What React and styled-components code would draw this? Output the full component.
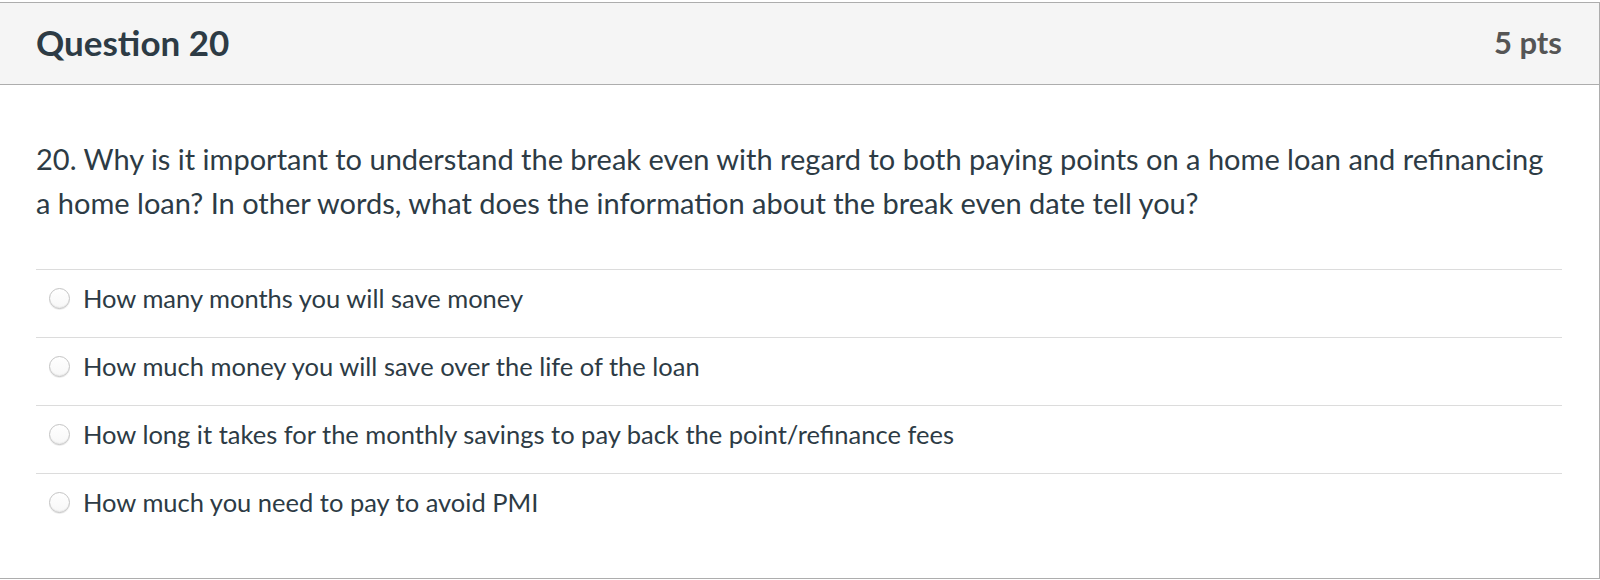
import styled, { createGlobalStyle } from "styled-components";

const GlobalStyle = createGlobalStyle`
  html, body {
    margin: 0;
    padding: 0;
    background: #ffffff;
  }
  body {
    font-family: Lato, "Open Sans", sans-serif;
    color: #2d3b45;
  }
`;

const Page = styled.div`
  padding-top: 2px;
  width: 1600px;
  height: 580px;
  box-sizing: border-box;
`;

const Panel = styled.div`
  border: 1px solid #adadad;
  border-left: none;
  height: 577px;
  box-sizing: border-box;
  display: flex;
  flex-direction: column;
`;

const Header = styled.div`
  background: #f5f5f5;
  border-bottom: 1px solid #adadad;
  height: 78px;
  box-sizing: content-box;
  display: flex;
  align-items: center;
  justify-content: space-between;
  padding: 0 37px 3px 36px;
`;

const Title = styled.h2`
  margin: 0;
  font-size: 35px;
  font-weight: 700;
  color: #2d3b45;
`;

const Points = styled.span`
  font-size: 31px;
  font-weight: 700;
  color: #555555;
`;

const Body = styled.div`
  padding: 52px 37px 36px 36px;
`;

const QuestionText = styled.p`
  margin: 0 0 44px;
  font-size: 29px;
  line-height: 44px;
`;

const Answers = styled.div`
  display: flex;
  flex-direction: column;
`;

const Answer = styled.label`
  display: flex;
  align-items: center;
  gap: 13px;
  height: 56px;
  padding: 0 0 11px 13px;
  border-top: 1px solid #dcdcdc;
  font-size: 25.5px;
  cursor: pointer;
`;

const Radio = styled.span`
  width: 19px;
  height: 19px;
  border-radius: 50%;
  border: 1px solid #c4c4c4;
  background: linear-gradient(#ffffff, #f7f7f7);
  box-shadow: inset 0 -1px 1px rgba(0, 0, 0, 0.06), 0 1px 0 rgba(0, 0, 0, 0.08);
  flex-shrink: 0;
  margin-top: 1px;
`;

const answers = [
  "How many months you will save money",
  "How much money you will save over the life of the loan",
  "How long it takes for the monthly savings to pay back the point/refinance fees",
  "How much you need to pay to avoid PMI",
];

export default function App() {
  return (
    <Page>
      <GlobalStyle />
      <Panel>
        <Header>
          <Title>Question 20</Title>
          <Points>5 pts</Points>
        </Header>
        <Body>
          <QuestionText>
            20. Why is it important to understand the break even with regard to
            both paying points on a home loan and refinancing a home loan? In
            other words, what does the information about the break even date
            tell you?
          </QuestionText>
          <Answers>
            {answers.map((a) => (
              <Answer key={a}>
                <Radio />
                {a}
              </Answer>
            ))}
          </Answers>
        </Body>
      </Panel>
    </Page>
  );
}
